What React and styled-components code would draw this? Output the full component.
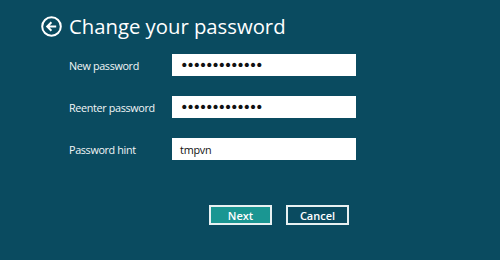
import styled, { createGlobalStyle } from "styled-components";

const GlobalStyle = createGlobalStyle`
  html, body {
    margin: 0;
    padding: 0;
    background: #0a4b60;
  }
  body {
    font-family: "Open Sans", "Noto Sans", sans-serif;
  }
`;

const fields = [
  { label: "New password", value: "•••••••••••••", secret: true },
  { label: "Reenter password", value: "•••••••••••••", secret: true },
  { label: "Password hint", value: "tmpvn" },
];

export default function App() {
  return (
    <>
      <GlobalStyle />
      <Page>
        <Header>
          <BackBtn aria-label="Back">
            <svg width="21" height="21" viewBox="0 0 21 21" fill="none">
              <circle cx="10.5" cy="10.5" r="9.3" stroke="#fff" strokeWidth="2" />
              <path d="M15.2 10.5H6.4M10.4 6.3L6.2 10.5l4.2 4.2" stroke="#fff" strokeWidth="2" />
            </svg>
          </BackBtn>
          <Title>Change your password</Title>
        </Header>

        <Form>
          {fields.map((f) => (
            <Row key={f.label}>
              <Label>{f.label}</Label>
              <Field $secret={f.secret}>{f.value}</Field>
            </Row>
          ))}
        </Form>

        <Actions>
          <Button $primary>Next</Button>
          <Button>Cancel</Button>
        </Actions>
      </Page>
    </>
  );
}

const Page = styled.div`
  width: 500px;
  height: 260px;
  box-sizing: border-box;
  padding: 15px 0 0 41px;
  color: #fff;
`;

const Header = styled.header`
  display: flex;
  align-items: center;
  gap: 7px;
  height: 22px;
`;

const BackBtn = styled.button`
  display: flex;
  padding: 0;
  border: 0;
  background: none;
  cursor: pointer;
`;

const Title = styled.h1`
  margin: 0;
  font-size: 20.3px;
  font-weight: 400;
  line-height: 22px;
`;

const Form = styled.div`
  display: flex;
  flex-direction: column;
  gap: 20px;
  margin: 17px 0 0 28px;
`;

const Row = styled.div`
  display: grid;
  grid-template-columns: 103px 184px;
  align-items: center;
`;

const Label = styled.span`
  font-size: 10.8px;
  letter-spacing: -0.35px;
  color: #f2f6f7;
`;

const Field = styled.div`
  height: 22px;
  box-sizing: border-box;
  padding: 0 0 0 8px;
  background: #fff;
  color: #111;
  display: flex;
  align-items: center;
  font-family: ${(p) => (p.$secret ? '"DejaVu Sans", sans-serif' : '"Open Sans", sans-serif')};
  font-size: ${(p) => (p.$secret ? "14.5px" : "10.8px")};
  letter-spacing: ${(p) => (p.$secret ? "-2.3px" : "-0.2px")};
`;

const Actions = styled.div`
  display: flex;
  gap: 14px;
  margin: 45px 0 0 168px;
`;

const Button = styled.button`
  width: 63px;
  height: 20px;
  box-sizing: border-box;
  border: 2px solid #e8f1f2;
  background: ${(p) => (p.$primary ? "#1a9692" : "#0a4b60")};
  color: #fff;
  font-family: "Open Sans", sans-serif;
  font-size: 11px;
  font-weight: 600;
  padding: 0;
  cursor: pointer;
`;
